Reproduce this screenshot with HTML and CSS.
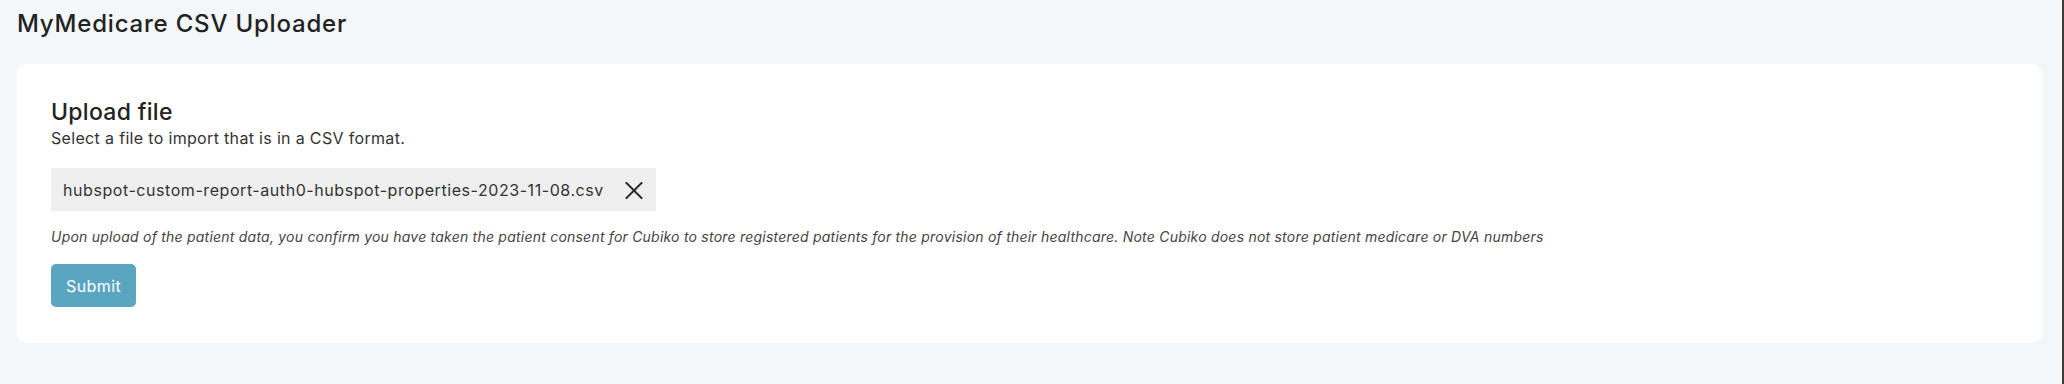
FILE: index.html
```html
<!DOCTYPE html>
<html lang="en">
<head>
<meta charset="utf-8">
<title>MyMedicare CSV Uploader</title>
<link rel="stylesheet" href="styles.css">
</head>
<body>
<div class="page">
  <h1 class="title">MyMedicare CSV Uploader</h1>
  <section class="card">
    <h2 class="card-title">Upload file</h2>
    <p class="hint">Select a file to import that is in a CSV format.</p>
    <div class="file-chip">
      <span class="file-name">hubspot-custom-report-auth0-hubspot-properties-2023-11-08.csv</span>
      <button class="file-remove" type="button" aria-label="Remove file">
        <svg width="18" height="17" viewBox="0 0 18 17" aria-hidden="true">
          <path d="M1.5 1 L16.5 16 M16.5 1 L1.5 16" stroke="#2b2b2b" stroke-width="2" stroke-linecap="square" fill="none"/>
        </svg>
      </button>
    </div>
    <p class="consent">Upon upload of the patient data, you confirm you have taken the patient consent for Cubiko to store registered patients for the provision of their healthcare. Note Cubiko does not store patient medicare or DVA numbers</p>
    <button class="submit" type="button">Submit</button>
  </section>
</div>
</body>
</html>
```
FILE: styles.css
```css
html, body {
  margin: 0;
  padding: 0;
  height: 100%;
}

body {
  background: #f3f7fa;
  font-family: Inter, "Noto Sans", sans-serif;
  color: #333;
  overflow: hidden;
}

.page {
  box-sizing: border-box;
  height: 100%;
  padding: 8px 20px 0 17px;
  border-right: 2px solid #3a3a3a;
}

.title {
  margin: 0;
  font-size: 24px;
  line-height: 32px;
  font-weight: 500;
  letter-spacing: 0.8px;
  color: #222;
}

.card {
  margin-top: 24px;
  background: #fff;
  border-radius: 10px;
  padding: 34px 34px 36px;
  display: flex;
  flex-direction: column;
  align-items: flex-start;
}

.card-title {
  margin: 0;
  font-size: 23px;
  line-height: 28px;
  font-weight: 500;
  letter-spacing: 0.3px;
  color: #222;
}

.hint {
  margin: 2px 0 0;
  font-size: 16px;
  line-height: 20px;
  letter-spacing: 0.33px;
  color: #333;
}

.file-chip {
  margin-top: 20px;
  display: flex;
  align-items: center;
  gap: 21px;
  background: #efefef;
  padding: 12px 13px 11px 12px;
}

.file-name {
  font-size: 16px;
  line-height: 20px;
  letter-spacing: 0.56px;
  color: #333;
}

.file-remove {
  border: 0;
  background: none;
  padding: 0;
  display: flex;
  cursor: pointer;
}

.consent {
  margin: 17px 0 0;
  font-size: 14px;
  line-height: 18px;
  font-style: italic;
  letter-spacing: 0.22px;
  color: #444;
}

.submit {
  margin-top: 18px;
  border: 0;
  border-radius: 5px;
  background: #5aa6c0;
  color: #fff;
  font-family: inherit;
  font-size: 16px;
  line-height: 20px;
  letter-spacing: 0.4px;
  padding: 12px 15px 11px;
  cursor: pointer;
}
```
